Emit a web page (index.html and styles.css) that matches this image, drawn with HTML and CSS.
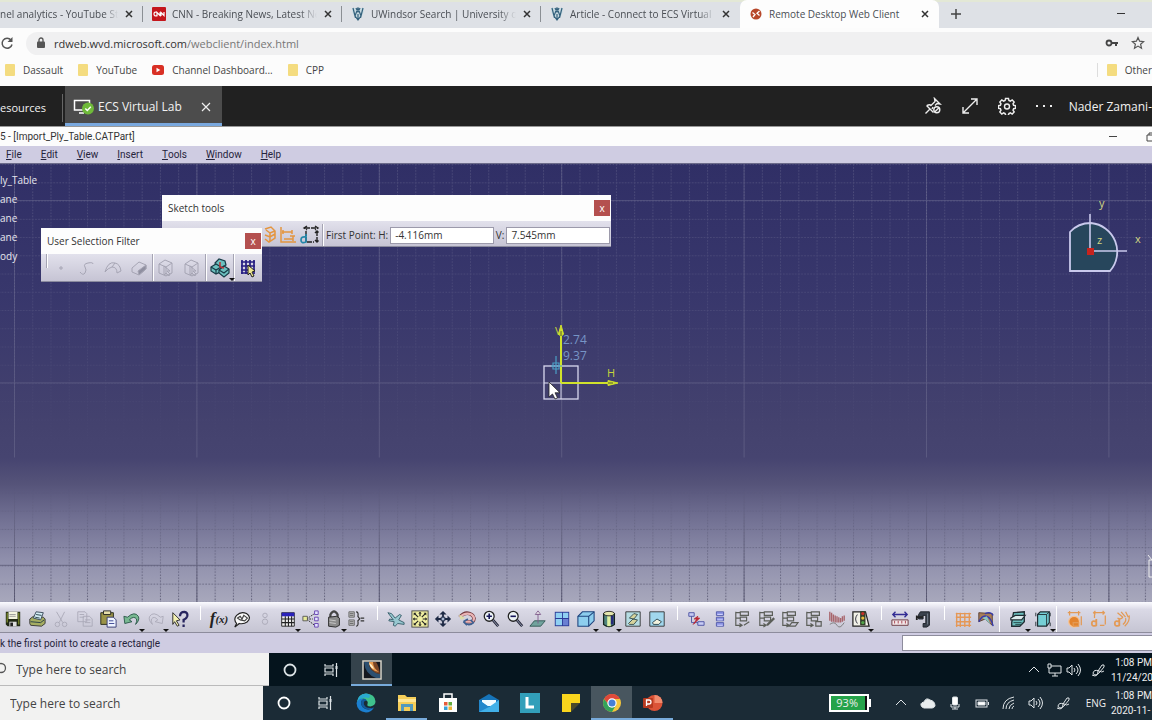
FILE: index.html
```
<!DOCTYPE html>
<html lang="en">
<head>
  <meta charset="UTF-8" />
  <meta name="viewport" content="width=device-width, initial-scale=1.0"/>
  <title>Remote Desktop Web Client</title>
  <link rel="stylesheet" href="styles.css">
</head>
<body>

  <!-- Browser tabs -->
  <nav class="tabs">
    <div class="tab tab-first">
      <span class="tab-title">nel analytics - YouTube Stu</span>
      <button class="close" aria-label="Close tab"><svg viewBox="0 0 10 10"><path d="M2 2l6 6M8 2l-6 6"/></svg></button>
    </div>
    <div class="tab">
      <svg class="favicon" viewBox="0 0 14 14"><rect width="14" height="14" rx="1" fill="#c4161c"/><path d="M5 5.200Q2 4.600 2 7t3 1.800V5.500L8 8.500V5.200M9 9V5.500L12 8.500V5" fill="none" stroke="#fff" stroke-width="1.200"/></svg>
      <span class="tab-title">CNN - Breaking News, Latest Ne</span>
      <button class="close" aria-label="Close tab"><svg viewBox="0 0 10 10"><path d="M2 2l6 6M8 2l-6 6"/></svg></button>
    </div>
    <div class="tab">
      <svg class="favicon" viewBox="0 0 14 14"><path d="M1 1h12q0 8-6 12Q1 9 1 1z" fill="#c9dbe2"/><path d="M2 1l2 8 3-8 3 8 2-8M4 9l3 4 3-4M5 1l2 4 2-4M7 7v6" fill="none" stroke="#34617c" stroke-width="1.200"/></svg>
      <span class="tab-title">UWindsor Search | University of</span>
      <button class="close" aria-label="Close tab"><svg viewBox="0 0 10 10"><path d="M2 2l6 6M8 2l-6 6"/></svg></button>
    </div>
    <div class="tab tab-before">
      <svg class="favicon" viewBox="0 0 14 14"><path d="M1 1h12q0 8-6 12Q1 9 1 1z" fill="#c9dbe2"/><path d="M2 1l2 8 3-8 3 8 2-8M4 9l3 4 3-4M5 1l2 4 2-4M7 7v6" fill="none" stroke="#34617c" stroke-width="1.200"/></svg>
      <span class="tab-title">Article - Connect to ECS Virtual L</span>
      <button class="close" aria-label="Close tab"><svg viewBox="0 0 10 10"><path d="M2 2l6 6M8 2l-6 6"/></svg></button>
    </div>
    <div class="tab tab-active">
      <svg class="favicon" viewBox="0 0 14 14"><circle cx="7" cy="7" r="5.500" fill="#b7472a"/><path d="M3.500 5.500l2.500 2-2 2.500M10.500 4L8 6.200l2.500 2.300" fill="none" stroke="#fff" stroke-width="1.300"/></svg>
      <span class="tab-title">Remote Desktop Web Client</span>
      <button class="close" aria-label="Close tab"><svg viewBox="0 0 10 10"><path d="M2 2l6 6M8 2l-6 6"/></svg></button>
    </div>
    <button class="new-tab" aria-label="New tab"><svg viewBox="0 0 12 12"><path d="M6 1v10M1 6h10"/></svg></button>
    <button class="win-min" aria-label="Minimize"><svg viewBox="0 0 10 10"><path d="M1 4.500h8"/></svg></button>
  </nav>

  <div class="address">
    <button class="reload" aria-label="Reload"><svg viewBox="0 0 14 14"><path d="M11 4A5 5 0 1 0 12 8.500" fill="none" stroke="#555" stroke-width="1.500"/><path d="M12.500 1v5h-5z" fill="#555"/></svg></button>
    <div class="url">
      <svg class="lock" viewBox="0 0 10 12"><rect x="1" y="4.500" width="8" height="6.500" rx="1" fill="#555"/><path d="M3 5V3a2 2 0 0 1 4 0v2" fill="none" stroke="#555" stroke-width="1.300"/></svg>
      <span class="url-text">rdweb.wvd.microsoft.com<i>/webclient/index.html</i></span>
      <svg class="url-icon" viewBox="0 0 14 14"><circle cx="4" cy="7" r="2.500" fill="none" stroke="#444" stroke-width="1.800"/><path d="M6.500 7H13M11 7v3" fill="none" stroke="#444" stroke-width="2"/></svg>
      <svg class="url-icon" viewBox="0 0 14 14"><path d="M7 1.500l1.600 3.700 4 .4-3 2.600.9 4L7 10.100l-3.500 2.100.9-4-3-2.600 4-.4z" fill="none" stroke="#555" stroke-width="1.200"/></svg>
    </div>
  </div>

  <div class="bookmarks">
    <a href="#"><span class="folder"></span>Dassault</a>
    <a href="#"><span class="folder"></span>YouTube</a>
    <a href="#"><svg class="yt" viewBox="0 0 12 10"><rect width="12" height="10" rx="2.500" fill="#d93025"/><path d="M4.500 2.800v4.400L8.300 5z" fill="#fff"/></svg>Channel Dashboard...</a>
    <a href="#"><span class="folder"></span>CPP</a>
    <a href="#" class="other"><span class="folder"></span>Other</a>
  </div>

  <!-- Remote desktop bar -->
  <header class="remote">
    <a href="#" class="resources">esources</a>
    <div class="session">
      <svg class="monitor" viewBox="0 0 22 18"><path d="M10 12H1.500V2.500h15V6M6 15h5" fill="none" stroke="#fff" stroke-width="1.500"/><circle cx="15" cy="10.500" r="6" fill="#6fba3a"/><path d="M12.300 10.500l2 2 3.500-3.700" fill="none" stroke="#fff" stroke-width="1.400"/></svg>
      <span>ECS Virtual Lab</span>
      <button aria-label="Close session"><svg viewBox="0 0 10 10"><path d="M1 1l8 8M9 1L1 9"/></svg></button>
    </div>
    <div class="remote-tools">
      <button aria-label="Unpin"><svg viewBox="0 0 18 18"><path d="M1.500 16.500L6 12M2.500 8.500l7 7M3 8.500q3-1.500 4 0l4-4-.5-3 5.500 5.500-3-.5-2 2M9 10l-1 2"/><circle cx="12.800" cy="12.800" r="3"/><path d="M10.700 15l4.300-4.300"/></svg></button>
      <button aria-label="Full screen"><svg viewBox="0 0 18 18"><path d="M2 16L16 2M10 2h6v6M2 10v6h6"/></svg></button>
      <button aria-label="Settings"><svg viewBox="0 0 18 18"><path d="M7.500 1.500h3l.4 2 1.500.7 1.800-1.200 2 2-1.200 1.800.6 1.500 2 .4v2.600l-2 .4-.6 1.500 1.200 1.800-2 2-1.800-1.200-1.500.7-.4 2h-3l-.4-2-1.500-.7L3.800 17l-2-2L3 13.200l-.6-1.500-2-.4V8.700l2-.4L3 6.800 1.800 5l2-2 1.800 1.200 1.500-.7z"/><circle cx="9" cy="9.500" r="2.500"/></svg></button>
      <button aria-label="More"><svg viewBox="0 0 18 18"><path d="M1 9h2M8 9h2M15 9h2" stroke-width="2"/></svg></button>
    </div>
    <span class="user">Nader Zamani-</span>
  </header>

  <div class="app-title">
    <span>5 - [Import_Ply_Table.CATPart]</span>
    <button aria-label="Minimize"><svg viewBox="0 0 10 10"><path d="M1 4.500h8"/></svg></button>
    <button class="restore" aria-label="Restore"><svg viewBox="0 0 10 10"><path d="M1 3h6v6H1zM3 3V1h6v6H7"/></svg></button>
  </div>

  <nav class="menu">
    <button><u>F</u>ile</button>
    <button><u>E</u>dit</button>
    <button><u>V</u>iew</button>
    <button><u>I</u>nsert</button>
    <button><u>T</u>ools</button>
    <button><u>W</u>indow</button>
    <button><u>H</u>elp</button>
  </nav>

  <!-- Sketcher -->
  <main class="sketch">
    <svg class="drawing">
      <defs>
        <pattern id="minor" x="14" y="36.600" width="18.240" height="18.240" patternUnits="userSpaceOnUse">
          <path d="M0 .5H18.240M.5 0V18.240" stroke-dasharray="1.500 1.500"/>
        </pattern>
        <pattern id="major" x="14" y="36" width="182.400" height="182.400" patternUnits="userSpaceOnUse">
          <path d="M0 .5H182.400M.5 0V182.400"/>
        </pattern>
        <pattern id="minorDark" x="14" y="36.600" width="18.240" height="18.240" patternUnits="userSpaceOnUse">
          <path d="M0 .5H18.240M.5 0V18.240" stroke-dasharray="1.500 1.500"/>
        </pattern>
        <pattern id="majorDark" x="14" y="36" width="182.400" height="182.400" patternUnits="userSpaceOnUse">
          <path d="M0 .5H182.400M.5 0V182.400"/>
        </pattern>
        <linearGradient id="fadeTop" x2="0" y2="1">
          <stop offset="0" stop-color="#fff"/>
          <stop offset=".35" stop-color="#999"/>
          <stop offset=".6" stop-color="#222"/>
          <stop offset=".68" stop-color="#000"/>
        </linearGradient>
        <linearGradient id="fadeBottom" x2="0" y2="1">
          <stop offset=".74" stop-color="#000"/>
          <stop offset=".86" stop-color="#999"/>
          <stop offset="1" stop-color="#fff"/>
        </linearGradient>
        <mask id="topMask"><rect width="100%" height="100%" fill="url(#fadeTop)"/></mask>
        <mask id="bottomMask"><rect width="100%" height="100%" fill="url(#fadeBottom)"/></mask>
      </defs>
      <rect width="100%" height="100%" fill="url(#minor)" mask="url(#topMask)" opacity=".35"/>
      <rect width="100%" height="67%" fill="url(#major)" opacity=".3"/>
      <g mask="url(#bottomMask)">
        <rect width="100%" height="100%" fill="url(#minorDark)" opacity=".8"/>
        <rect width="100%" height="100%" fill="url(#majorDark)" opacity=".8"/>
      </g>

      <!-- rectangle under construction -->
      <rect x="544" y="202" width="34" height="33" fill="none" stroke="#d8d8ee" stroke-width="1.300"/>
      <path d="M544 219h17M561 219v16" stroke="#d8d8ee"/>
      <!-- H and V axes -->
      <path d="M561 219V172M561 219h47" stroke="#d0e22c" stroke-width="2"/>
      <path d="M561 161l-2.500 9q2.500 4 5 0zM618 219l-10-2.500v5z" fill="#d0e22c" stroke="#d0e22c"/>
      <path d="M561 167v5M608 219h5" stroke="#555a30" stroke-width="1"/>
      <text x="555" y="171" class="axis">V</text>
      <text x="607" y="213" class="axis">H</text>
      <path d="M556 192v18M551 202h11M553 199h6v6h-6z" fill="none" stroke="#4b9fc6" stroke-width="1.200"/>
      <text x="563" y="180" class="coord">2.74</text>
      <text x="563" y="196" class="coord">9.37</text>
      <path d="M549 218v15l3.500-3 2.500 5 2.500-1.200-2.500-5h5z" fill="#fff" stroke="#222" stroke-width=".8"/>
    </svg>

    <ul class="tree">
      <li>ly_Table</li>
      <li>ane</li>
      <li>ane</li>
      <li>ane</li>
      <li>ody</li>
    </ul>

    <svg class="compass" viewBox="0 0 92 84">
      <path d="M10 22Q18 13 31 13A29 29 0 0 1 50 61H10z" fill="#27465c" stroke="#c9c9ec" stroke-width="1.800"/>
      <path d="M30 41V4M30 41h37" stroke="#c9c9ec" stroke-width="1.600"/>
      <rect x="27" y="38" width="7" height="7" fill="#c8231d"/>
      <text x="39" y="-3">y</text>
      <text x="75" y="33">x</text>
      <text x="37" y="34">z</text>
    </svg>

    <svg class="corner" viewBox="0 0 5 24"><path d="M5 5H2v17h3M1 0l4 5"/></svg>

    <section class="window sketch-tools">
      <div class="window-title">Sketch tools<button aria-label="Close">x</button></div>
      <div class="window-body">
        <svg class="tool orange" viewBox="0 0 20 20"><path d="M9 4l6-2 4 4v7l-6 4-4-3M10 5l4 3 5-2M14 8v8M9 10l5 2 5-3" fill="none"/></svg>
        <svg class="tool orange" viewBox="0 0 20 20"><path d="M3 2v15h15M4 7h10M5 5v4M14 5v4M15 11v5M12 11h5M6 14h9" fill="none"/></svg>
        <svg class="tool" viewBox="0 0 20 20"><path d="M5 3h12M7 1L4 3l3 2M15 1l3 2-3 2M17 6v11M15 8l2-2 2 2M15 15l2 2 2-2M6 6v11h8" fill="none" stroke="#222" stroke-width="1.400" stroke-dasharray="5 1"/><path d="M6 12q-5-1-5 3t5 2V9" fill="none" stroke="#2387a9" stroke-width="1.700"/></svg>
        <span class="rule"></span>
        <label for="point-h">First Point: H:</label>
        <input id="point-h" type="text" value="-4.116mm">
        <label for="point-v">V:</label>
        <input id="point-v" type="text" value="7.545mm">
      </div>
    </section>

    <section class="window filter">
      <div class="window-title">User Selection Filter<button aria-label="Close">x</button></div>
      <div class="window-body">
        <span class="rule rule-short"></span>
        <button aria-label="Point filter"><svg class="tool faded" viewBox="0 0 20 20"><path d="M9 9h2v2H9z"/></svg></button>
        <button aria-label="Curve filter"><svg class="tool faded" viewBox="0 0 20 20"><path d="M3 14q3 4 5 1t0-6 3-4 5 1"/></svg></button>
        <button aria-label="Surface filter"><svg class="tool faded" viewBox="0 0 20 20"><path d="M2 14Q5 3 12 5q5 1 6 8l-4 2q0-6-5-6-4 1-7 5zM12 5l-3 4"/></svg></button>
        <button aria-label="Volume filter"><svg class="tool faded" viewBox="0 0 20 20"><path d="M3 10l7-6 7 3v4l-7 6-7-3z"/><path d="M9 13l8-6v4l-7 6z" fill="#8f8fa0"/></svg></button>
        <span class="rule"></span>
        <button aria-label="Feature element filter"><svg class="tool faded" viewBox="0 0 20 20"><path d="M3 6l6-4 7 3v10l-6 3-7-3zM3 6l7 3v9M10 9l6-4M8 8v9l2-2 3 3 1-2-3-3h3z"/></svg></button>
        <button aria-label="Geometrical element filter"><svg class="tool faded" viewBox="0 0 20 20"><path d="M3 6l6-4 7 3v10l-6 3-7-3zM3 6l7 3v9M10 9l6-4M8 8v9l2-2 3 3 1-2-3-3h3z"/></svg></button>
        <span class="rule"></span>
        <button class="more" aria-label="Selection sets"><svg class="tool" viewBox="0 0 20 20"><g fill="#6cc0bf" stroke="#183b47" stroke-width="1.200"><path d="M5 5l4-4 6 2 1 4-5 3-5-2z"/><path d="M1 9l5-3 5 3-1 5-4 2-5-3z"/><path d="M9 12l5-4 5 3v4l-5 4-5-4z"/><path d="M1 9l5 3 5-3M6 12v4M9 12l5 3 5-4" fill="none"/></g><path d="M10 4v5l4 1" fill="none" stroke="#ba3135" stroke-width="1.500"/></svg></button>
        <span class="rule"></span>
        <button aria-label="Grid selection"><svg class="tool" viewBox="0 0 20 20"><path d="M4 2v14M8 2v14M12 2v14M16 2v14M3 4h14M3 8h14M3 12h14M3 15h10" stroke="#251c82" stroke-width="1.700"/><path d="M10 7l7 6-3 1 2 4-2 1-2-4-2 2z" fill="#eee791" stroke="#222"/></svg></button>
      </div>
    </section>
  </main>

  <!-- Bottom tool bar, one group per separator -->
  <div class="toolbar">
    <div class="group group-standard">
      <button aria-label="Save"><svg viewBox="0 0 20 20"><path d="M2 2h16v16H4l-2-2z" fill="#202814"/><path d="M5 2h10v8H5z" fill="#f3f4e0"/><path d="M3 3h1v11H3zM16 3h1v13h-1z" fill="#a4b43a"/><path d="M6 13h8v5H6z" fill="#ddd"/><path d="M7 14h3v4H7z" fill="#222"/><path d="M6 5h7M6 7h7" stroke="#999"/></svg></button>
      <button aria-label="Print"><svg viewBox="0 0 20 20"><path d="M2 10l4-3 11 1 2 2v5l-4 3-12-1-1-2z" fill="#a5ad62" stroke="#333"/><path d="M6 9l3-7 8 1-3 8z" fill="#d3ecf4" stroke="#345"/><path d="M3 13l11 1 4-3M9 5l6 1M8 8l5 1" stroke="#223b44" fill="none"/></svg></button>
      <button aria-label="Cut"><svg viewBox="0 0 20 20" class="disabled"><path d="M5 2l7 12M14 2L8 14"/><circle cx="6" cy="16" r="2.500"/><circle cx="14" cy="16" r="2.500"/></svg></button>
      <button aria-label="Copy"><svg viewBox="0 0 20 20" class="disabled"><path d="M2 2h8l2 2v9H2zM8 7h7l3 3v8H8zM4 5h5M4 8h5M10 11h6M10 14h6"/></svg></button>
      <button aria-label="Paste"><svg viewBox="0 0 20 20"><path d="M2 3h14v13H2z" fill="#9a9347" stroke="#242716"/><path d="M5 1h8v4H5z" fill="#e6dfab" stroke="#222"/><path d="M9 8h7l3 3v8H9z" fill="#eef3ff" stroke="#333870"/><path d="M11 12h5M11 15h6" stroke="#35418e"/></svg></button>
      <button class="more" aria-label="Undo"><svg viewBox="0 0 20 20"><path d="M1 7l1 8 8-2-3-2q5-5 8-1 1 2-1 6 5-5 3-9-4-6-12 1z" fill="#78b891" stroke="#285647"/></svg></button>
      <button class="more" aria-label="Redo"><svg viewBox="0 0 20 20" class="disabled"><path d="M18 7l-1 8-8-2 3-2Q8 6 5 10q-1 2 1 6-5-5-3-9 4-6 12 1z"/></svg></button>
      <button aria-label="What's this"><svg viewBox="0 0 20 20"><path d="M2 3l8 8-4 1 3 5-2 1-3-5-2 3z" fill="#f4f1b2" stroke="#222"/><path d="M10 7q0-5 5-5 4 1 3 5-1 3-4 4v3M14 16v3" fill="none" stroke="#27245e" stroke-width="2.500"/></svg></button>
    </div>

    <div class="group group-knowledge">
      <button class="fx" aria-label="Formula">f<small>(x)</small></button>
      <button aria-label="Comment"><svg viewBox="0 0 20 20"><path d="M4 15Q0 10 4 6q5-5 11-2 6 4 1 9-4 3-9 2l-5 4z" fill="#fafafa" stroke="#222" stroke-width="1.300"/><path d="M5 9l3-2 2 3 2-4 4 3-3 3-5-1z" fill="none" stroke="#444" stroke-width="1.300"/></svg></button>
      <button aria-label="Link"><svg viewBox="0 0 20 20" class="disabled"><circle cx="10" cy="6" r="2.500"/><circle cx="10" cy="13" r="3"/></svg></button>
      <button class="more" aria-label="Design table"><svg viewBox="0 0 20 20"><path d="M3 3h14v15H3z" fill="#eee" stroke="#222"/><path d="M3 3h14v4H3z" fill="#2a22bb"/><path d="M3 10h14M3 14h14M7 7v11M10.500 7v11M14 7v11" stroke="#222" stroke-width="1.200"/></svg></button>
      <button aria-label="Relations"><svg viewBox="0 0 20 20"><path d="M5 10h7M5 10l9-6M5 10l9 7" stroke="#222" stroke-dasharray="2 1"/><path d="M1 7h5v5H1z" fill="#e8eb9a" stroke="#555"/><path d="M14 1h4v4h-4zM14 8h4v4h-4zM14 15h4v4h-4z" fill="#e4e4ff" stroke="#6440b0"/></svg></button>
      <button class="more" aria-label="Lock parameter"><svg viewBox="0 0 20 20"><path d="M6 9V5q4-7 8 0v5" fill="none" stroke="#444" stroke-width="2.500"/><path d="M4 8l9-1 3 2v8l-4 2-8-1z" fill="#8b8b8b" stroke="#222"/><path d="M5 11l7 1M5 14l7 1" stroke="#ccc"/></svg></button>
      <button aria-label="Equivalent dimensions"><svg viewBox="0 0 20 20"><path d="M1 2h6v6H1zM1 11h6v6H1zM2 4h4M2 6h4M2 13h4M2 15h4" fill="#bbb" stroke="#666"/><path d="M9 2q3 0 2 5l2 3-2 2q1 6-2 6M14 9h4M14 12h4" fill="none" stroke="#333" stroke-width="1.300"/></svg></button>
    </div>

    <div class="group group-view">
      <button aria-label="Fly mode"><svg viewBox="0 0 20 20"><path d="M1 3l4 1 4 5 5-4 2 1-3 5 6 3v2l-7-1-3 3-2-1 1-4-6-1 1-2 4 1z" fill="#98c8d0" stroke="#345b68"/></svg></button>
      <button aria-label="Fit all in"><svg viewBox="0 0 20 20"><rect x="1" y="1" width="18" height="18" fill="#f1efa2" stroke="#444"/><path d="M4 4l4 4M16 4l-4 4M4 16l4-4M16 16l-4-4M10 3v4M10 13v4M3 10h4M13 10h4" stroke="#222" stroke-width="1.300"/><path d="M3 3h3L3 6zM17 3v3l-3-3zM3 17v-3l3 3zM17 17h-3l3-3zM10 2l2 2H8zM10 18l-2-2h4zM2 10l2-2v4zM18 10l-2 2V8z" fill="#222"/></svg></button>
      <button aria-label="Pan"><svg viewBox="0 0 20 20"><path d="M10 1l4 4H6zM10 19l-4-4h8zM1 10l4-4v8zM19 10l-4 4V6z" fill="#1d2944"/><path d="M10 4v12M4 10h12" stroke="#1d2944" stroke-width="2"/><path d="M8 8h4v4H8z" fill="#aab8d3" stroke="#1d2944"/></svg></button>
      <button aria-label="Rotate"><svg viewBox="0 0 20 20"><path d="M2 8q6-7 13-3 5 4 1 8H8" fill="none" stroke="#71373c" stroke-width="4"/><path d="M2 8q6-6 13-3 5 4 1 8H8" fill="none" stroke="#e9b4b5" stroke-width="2.500"/><path d="M1 5l2 6 5-2z" fill="#dda"/><path d="M6 13q6 6 11 1l-3-3M6 13l5-3M6 13l4 4" fill="none" stroke="#3d5f91" stroke-width="1.800"/></svg></button>
      <button aria-label="Zoom in"><svg viewBox="0 0 20 20"><path d="M12 11l6 7" stroke="#252535" stroke-width="3"/><path d="M12 11l6 7" stroke="#9aa5c1"/><circle cx="8" cy="7" r="5.500" fill="#eef4f6" stroke="#222" stroke-width="1.400"/><path d="M5 7h6M8 4v6" stroke="#16165a" stroke-width="1.800"/></svg></button>
      <button aria-label="Zoom out"><svg viewBox="0 0 20 20"><path d="M12 11l6 7" stroke="#252535" stroke-width="3"/><path d="M12 11l6 7" stroke="#9aa5c1"/><circle cx="8" cy="7" r="5.500" fill="#eef4f6" stroke="#222" stroke-width="1.400"/><path d="M5 7h6" stroke="#16165a" stroke-width="1.800"/></svg></button>
      <button aria-label="Normal view"><svg viewBox="0 0 20 20"><path d="M6 12h12l-5 6H1z" fill="#71a39d" stroke="#315653"/><path d="M10 15V4M7 5l3-4 3 4z" fill="#eee" stroke="#805c8c"/></svg></button>
      <button aria-label="Multi view"><svg viewBox="0 0 20 20"><path d="M2 2h16v16H2z" fill="#2b3a96"/><path d="M3 3h7v6H3zM11 3h6v6h-6zM3 10h7v7H3z" fill="#8fd0f2"/><path d="M11 10h6v7h-6z" fill="#6a7fd2"/></svg></button>
      <button class="more" aria-label="Isometric view"><svg viewBox="0 0 20 20"><path d="M1 7l5-5h13v10l-6 6H1z" fill="#8dceee" stroke="#20457e" stroke-width="1.200"/><path d="M1 7h12v11M13 7l6-5" fill="none" stroke="#20457e" stroke-width="1.200"/></svg></button>
      <button class="more" aria-label="Shading"><svg viewBox="0 0 20 20"><path d="M4 4v12q6 5 12 0V4z" fill="#51857e" stroke="#16241f" stroke-width="1.400"/><path d="M8 6h4v12H8z" fill="#dff0a2"/><path d="M12 6h3v10h-3z" fill="#252978"/><ellipse cx="10" cy="4" rx="6" ry="2.500" fill="#e4e6ad" stroke="#222"/></svg></button>
      <button aria-label="Hide or show"><svg viewBox="0 0 20 20"><path d="M2 2h16v16H2z" fill="#b5dce2" stroke="#333"/><path d="M6 9l5-5 4 1-4 5zM5 15l5-5 5 1-4 5H6z" fill="#d6d39c" stroke="#334b4e"/></svg></button>
      <button aria-label="Swap visible space"><svg viewBox="0 0 20 20"><path d="M2 2h16v16H2z" fill="#a1d7ed" stroke="#333"/><path d="M5 14l5-4 5 3-3 3H6z" fill="#f3f3de" stroke="#223d48"/></svg></button>
    </div>

    <div class="group group-analysis">
      <button aria-label="Solving status"><svg viewBox="0 0 20 20"><path d="M2 3h6v4H2zM12 13h7v4h-7z" fill="#c7cbf5" stroke="#4a50a0"/><path d="M5 7v7h7" fill="none" stroke="#4a50a0"/><path d="M12 7l-4 3h3l-4 6 7-7h-3z" fill="#ba2835" stroke="#ba2835"/></svg></button>
      <button aria-label="Structure"><svg viewBox="0 0 20 20"><path d="M6 2h8v4H6zM6 8h8v4H6zM6 14h8v4H6z" fill="#9098e8" stroke="#5058a7"/><path d="M7 5h6M7 11h6M7 17h6" stroke="#d6d8ff"/></svg></button>
      <button aria-label="Geometry tree"><svg viewBox="0 0 20 20" class="branches"><path d="M2 2v15h7M2 3h5M2 9h5M7 2h9v4H7zM7 8h7v4H7zM6 15l3 2-3 2M11 17l6-4"/></svg></button>
      <button aria-label="Edit tree"><svg viewBox="0 0 20 20" class="branches"><path d="M2 2v15h7M2 3h5M2 9h5M7 2h9v4H7zM7 8h7v4H7zM6 15l3 2-3 2"/><path d="M10 17l8-8" stroke-width="2.500"/></svg></button>
      <button aria-label="Plane tree"><svg viewBox="0 0 20 20" class="branches"><path d="M2 2v15h6M2 3h5M2 9h5M7 2h9v4H7zM7 8h7v4H7zM6 15l3 2-3 2M12 14h7l-3 4H9z"/></svg></button>
      <button aria-label="Body tree"><svg viewBox="0 0 20 20" class="branches"><path d="M2 2v15h6M2 3h5M2 9h5M7 2h9v4H7zM7 8h7v4H7zM6 15l3 2-3 2M12 18v-5h6v5z"/></svg></button>
      <button aria-label="Curvature"><svg viewBox="0 0 20 20"><path d="M2 2v10M4 3v10M6 5v8M8 6v8M10 7v7M12 8v6M14 9v5M16 7v6M18 6v6" stroke="#a8656c" stroke-width="1.500"/><path d="M2 16q5-4 8 1t8-3" fill="none" stroke="#777"/></svg></button>
      <button class="more" aria-label="Analysis"><svg viewBox="0 0 20 20"><path d="M1 2h14l4 16H1z" fill="#f2f2e8" stroke="#222" stroke-width="1.400"/><rect x="9" y="1" width="6" height="16" rx="1" fill="#35402c"/><circle cx="12" cy="4" r="1.800" fill="#c7302a"/><circle cx="12" cy="9" r="1.800" fill="#e6bb3d"/><circle cx="12" cy="14" r="1.800" fill="#53a34b"/><path d="M6 5q-4 5 0 10" fill="none" stroke="#223"/></svg></button>
    </div>

    <div class="group group-measure">
      <button aria-label="Measure between"><svg viewBox="0 0 20 20"><path d="M3 5h14M5 2L2 5l3 3M15 2l3 3-3 3" fill="none" stroke="#322b94" stroke-width="1.500"/><path d="M1 11h18v6H1z" fill="#f3e6e8" stroke="#67323b"/><path d="M4 12v3M8 12v3M12 12v3M16 12v3" stroke="#a43b47"/></svg></button>
      <button aria-label="Measure item"><svg viewBox="0 0 20 20"><path d="M6 2h10v15l-3 2h-4v-4h3V6H9v4H4V5z" fill="#3b424d" stroke="#1a1e26"/><path d="M2 8h7M2 6v5" stroke="#222" stroke-width="2"/><path d="M14 4v12" stroke="#7b8591"/></svg></button>
    </div>

    <div class="group group-tight group-grid">
      <button aria-label="Grid"><svg viewBox="0 0 20 20"><path d="M3 3v16M7 3v16M12 3v16M17 3v16M2 4h17M2 8h17M2 13h17M2 17h17" stroke="#e59755" stroke-width="1.500"/></svg></button>
      <button aria-label="Snap to point"><svg viewBox="0 0 20 20"><path d="M2 3l15 1v13L9 10l-7 3z" fill="#a87c58" stroke="#573d30"/><path d="M2 13q4-8 9-6t7 11M9 4q6-3 9 2" fill="none" stroke="#3339af" stroke-width="1.500"/><path d="M6 9l5-2 4 9-4-4z" fill="#8cc8c6"/></svg></button>
    </div>

    <div class="group group-tight group-cut">
      <button class="more" aria-label="Cut part"><svg viewBox="0 0 20 20"><path d="M5 3l12-1v11l-5 5H3v-4z" fill="#6abebd" stroke="#202c32" stroke-width="1.500"/><path d="M2 9l5-3h11l-4 5H2z" fill="#dcebed" stroke="#202c32" stroke-width="1.300"/><path d="M5 14h9M7 16h7" stroke="#244"/></svg></button>
      <button class="more" aria-label="Show body"><svg viewBox="0 0 20 20"><path d="M4 5l3-3h10v12l-3 4H4z" fill="#75cfd5" stroke="#202c32" stroke-width="1.300"/><path d="M4 5h10v13M14 5l3-3M2 3v4M2 13v5M18 3v4M18 14v4" fill="none" stroke="#202c32"/></svg></button>
    </div>

    <div class="group group-constraints">
      <button aria-label="Construction element"><svg viewBox="0 0 20 20" class="constraint"><path d="M2 3h14M4 1v5M14 1v5M17 7v10"/><circle cx="9" cy="13" r="6" fill="#e3842e" stroke="#f6c496"/><path d="M8 14h6v4H8z" fill="#e3842e"/></svg></button>
      <button aria-label="Geometrical constraints"><svg viewBox="0 0 20 20" class="constraint"><path d="M4 3h11M6 1L4 3l2 2M14 1l2 2-2 2M17 6v10M11 17h5M5 5v4"/><path d="M7 13q-5-2-5 2t5 2v-7" stroke-width="2"/></svg></button>
      <button aria-label="Dimensional constraints"><svg viewBox="0 0 20 20" class="constraint"><path d="M5 3l6 5M9 2l5 6M14 2l3 6M18 6q1 7-5 12M14 9q1 4-3 7M11 8q-2 3-6 1"/><path d="M7 13q-5-2-5 2t5 2v-7" stroke-width="2"/></svg></button>
    </div>
  </div>

  <div class="status">
    <label for="command">k the first point to create a rectangle</label>
    <input id="command" type="text">
  </div>

  <!-- Taskbar of the remote machine -->
  <footer class="taskbar taskbar-remote">
    <div class="search">
      <svg viewBox="0 0 12 20"><circle cx="1" cy="9" r="4.500" fill="none" stroke="#555" stroke-width="1.300"/></svg>
      <input type="text" aria-label="Search" placeholder="Type here to search">
    </div>
    <div class="apps">
      <button aria-label="Cortana"><svg viewBox="0 0 20 20"><circle cx="10" cy="10" r="5.500" fill="none" stroke="#dde3e6" stroke-width="1.800"/></svg></button>
      <button aria-label="Task view"><svg viewBox="0 0 20 20"><path d="M4 4v2h8V4M4 16v-2h8v2M4 8h8v4H4zM15.500 3v14" fill="none" stroke="#dde3e6" stroke-width="1.200"/><path d="M14.500 6h2v3h-2z" fill="#dde3e6"/></svg></button>
      <button class="open" aria-label="Catia"><svg viewBox="0 0 20 20"><rect x="1" y="1" width="18" height="18" fill="#15171e" stroke="#d6d3c9" stroke-width="1.500"/><path d="M2 2h5q0 10 11 12v4h-4Q3 14 2 2z" fill="#2c4f70"/><path d="M7 2h7q3 4 4 12Q7 12 7 2z" fill="#7a4526"/><path d="M7 2h4q0 6 6 10-9-1-10-10z" fill="#e99c50"/><path d="M7 3q3 1 5 6-4-1-5-6z" fill="#fff1cd"/></svg></button>
    </div>
    <div class="tray">
      <svg viewBox="0 0 16 16"><path d="M3 10l5-5 5 5"/></svg>
      <svg viewBox="0 0 16 16"><path d="M2 2v4h3V2zM5 4h10v7H3V6M9 11v3M6 14h6"/></svg>
      <svg viewBox="0 0 16 16"><path d="M1 6v4h2l3 3V3L3 6zM8 6q2 2 0 4M10 4q4 4 0 8M12 2q5 6 0 12"/></svg>
      <svg class="pen" viewBox="0 0 16 16"><path d="M2 13q6 3 6-4l4-6q3-1 2 2l-5 6q-5 4-6 0 1-4 6-2 3 2 5 0"/></svg>
    </div>
    <div class="clock"><time>1:08 PM</time><span>11/24/20</span></div>
  </footer>

  <!-- Taskbar of the local machine -->
  <footer class="taskbar taskbar-local">
    <div class="search">
      <input type="text" aria-label="Search" placeholder="Type here to search">
    </div>
    <div class="apps">
      <button aria-label="Cortana"><svg viewBox="0 0 20 20"><circle cx="10" cy="10" r="5.500" fill="none" stroke="#fff" stroke-width="1.800"/></svg></button>
      <button aria-label="Task view"><svg viewBox="0 0 20 20"><path d="M4 4v2h8V4M4 16v-2h8v2M4 8h8v4H4zM15.500 3v14" fill="none" stroke="#dde3e6" stroke-width="1.200"/><path d="M14.500 6h2v3h-2z" fill="#dde3e6"/></svg></button>
      <button aria-label="Edge"><svg viewBox="0 0 20 20"><path d="M1 9Q2 1 10 .5q9 .5 9.500 8 0 4-5 5-4 0-3-2.500 1-3-2-4-4-1-8.500 2z" fill="#3fc28d"/><path d="M1 9Q2 1 10 .5 16 1 13 5 6 3 1 9z" fill="#2aa9d2"/><path d="M.5 10q2-5 6.500-4.500-4 5 0 9 5 4 11 0-3 5-8 5-9-1-9.500-9.500z" fill="#1b7fd0"/><path d="M7 5.500q3 0 4 2-4 0-3 4 2 5 10 3-5 4-11 0-4-4 0-9z" fill="#125a9e"/></svg></button>
      <button class="running" aria-label="Explorer"><svg viewBox="0 0 20 20"><path d="M1 2h7l2 2h9v14H1z" fill="#f5ce59"/><path d="M1 6h18v3H1z" fill="#ffe695"/><path d="M4 18v-7h12v7h-3v-4H7v4z" fill="#5299bd"/></svg></button>
      <button aria-label="Store"><svg viewBox="0 0 20 20"><path d="M6 6V1h8v5" fill="none" stroke="#fff" stroke-width="1.500"/><path d="M1 5h18v14H1z" fill="#fff"/><path d="M6 9h3.500v3.500H6z" fill="#e75b3b"/><path d="M10.500 9H14v3.500h-3.500z" fill="#65ad40"/><path d="M6 13.500h3.500V17H6z" fill="#36a0d8"/><path d="M10.500 13.500H14V17h-3.500z" fill="#edb336"/></svg></button>
      <button aria-label="Mail"><svg viewBox="0 0 20 20"><path d="M0 7l10-6 10 6v12H0z" fill="#1674b9"/><path d="M3 7h14v6H3z" fill="#f2fbff"/><path d="M0 7l10 7 10-7v12H0z" fill="#41b0e8"/><path d="M0 7l10 7-10 5z" fill="#2387cb"/></svg></button>
      <button aria-label="L"><svg viewBox="0 0 20 20"><path d="M0 0h20v20H0z" fill="#329fba"/><path d="M7 4v10h7" fill="none" stroke="#fff" stroke-width="3"/></svg></button>
      <button aria-label="Sticky Notes"><svg viewBox="0 0 20 20"><path d="M1 1h18v18H1z" fill="#f9d51d"/><path d="M10 10h9v9h-9z" fill="#4b4a2a"/><path d="M19 10v9h-9z" fill="#1b2b36"/></svg></button>
      <button class="running selected" aria-label="Chrome"><svg viewBox="0 0 20 20"><circle cx="10" cy="10" r="9" fill="#f5c63b"/><path d="M2 6a9 9 0 0 1 16 0h-8l-3 6z" fill="#df493b"/><path d="M2 6a9 9 0 0 0 8 13l4-7H7z" fill="#34a35a"/><circle cx="10" cy="10" r="4.700" fill="#fff"/><circle cx="10" cy="10" r="3.500" fill="#477fd5"/></svg></button>
      <button class="running" aria-label="PowerPoint"><svg viewBox="0 0 20 20"><circle cx="11.500" cy="10" r="8" fill="#db5337"/><path d="M11.500 2a8 8 0 0 1 8 8h-8z" fill="#f18b6d"/><rect y="5" width="10" height="10" rx="1" fill="#b7391f"/><path d="M3.500 13V7H6q2 0 2 2t-2 2H4" fill="none" stroke="#fff" stroke-width="1.300"/></svg></button>
    </div>
    <div class="battery">93%</div>
    <div class="tray">
      <svg viewBox="0 0 16 16"><path d="M3 10l5-5 5 5"/></svg>
      <svg viewBox="0 0 16 16"><path d="M2 12q-3-4 2-5 2-5 6-2 5 1 5 6-1 2-3 2H4z" fill="#e8ecee"/></svg>
      <svg viewBox="0 0 16 16"><rect x="5.500" y="2" width="5" height="8" rx="1" fill="#fff"/><path d="M4 9v3h8V9M8 12v2M5 14h6"/></svg>
      <svg viewBox="0 0 16 16"><rect x="2" y="5" width="11" height="7"/><path d="M4 7h7v3H4z" fill="#fff"/><path d="M14.500 7v3"/></svg>
      <svg viewBox="0 0 16 16"><path d="M2 14Q2 4 13 2M5 14q0-7 8-9M8 14q0-4 5-6M11 14q0-2 2-3"/></svg>
      <svg viewBox="0 0 16 16"><path d="M1 6v4h2l3 3V3L3 6zM8 6q2 2 0 4M10 4q4 4 0 8M12 2q5 6 0 12"/></svg>
      <svg viewBox="0 0 16 16"><path d="M2 13q6 3 6-4l4-6q3-1 2 2l-5 6q-5 4-6 0 1-4 6-2 3 2 5 0"/></svg>
      <span class="lang">ENG</span>
    </div>
    <div class="clock"><time>1:08 PM</time><span>2020-11-</span></div>
  </footer>

</body>
</html>
```

FILE: styles.css
```
* {
  box-sizing: border-box;
}

body {
  margin: 0;
  height: 100vh;
  display: flex;
  flex-direction: column;
  overflow: hidden;
  font-family: "Open Sans", "Noto Sans", sans-serif;
  font-size: 11px;
  color: #333;
  background: #fcfcfc;
}

button {
  display: flex;
  align-items: center;
  justify-content: center;
  flex: none;
  padding: 0;
  border: none;
  background: none;
  font: inherit;
  color: inherit;
}

input {
  font: inherit;
  color: inherit;
  border: none;
  outline: none;
  min-width: 0;
}

a {
  color: inherit;
  text-decoration: none;
}

svg {
  display: block;
  flex: none;
}

/* Browser */
.app-title,
.menu,
.status,
.clock {
  font-family: Roboto, "Noto Sans", sans-serif;
}

.tabs {
  height: 28px;
  flex: none;
  display: flex;
  align-items: stretch;
  padding-bottom: 2px;
  background: #dee1e6;
  border-top: 2px solid #e3e8d6;
  color: #4a4e54;
  font-size: 10px;
}

.tab {
  flex: 0 0 199px;
  min-width: 0;
  display: flex;
  align-items: center;
  gap: 6px;
  padding: 0 9px;
  position: relative;
}

.tab::after {
  content: "";
  position: absolute;
  right: 0;
  top: 4px;
  height: 16px;
  border-right: 1px solid #8b8f94;
}

.tab-first {
  flex-basis: 143px;
  padding-left: 0;
}

.tab-before::after,
.tab-active::after {
  display: none;
}

.tab-active {
  margin: -2px 0;
  padding: 2px 9px;
  background: #fdfdfd;
  border-radius: 7px 7px 0 0;
}

.tab-title {
  flex: 1;
  min-width: 0;
  white-space: nowrap;
  -webkit-mask-image: linear-gradient(to right, #000 88%, transparent);
  mask-image: linear-gradient(to right, #000 88%, transparent);
}

.tab-active .tab-title {
  -webkit-mask-image: none;
  mask-image: none;
}

.favicon {
  width: 14px;
  height: 14px;
}

.close svg {
  width: 10px;
  height: 10px;
  stroke: #333;
  stroke-width: 1.5;
}

.new-tab {
  width: 34px;
}

.new-tab svg {
  width: 12px;
  height: 12px;
  stroke: #444;
  stroke-width: 1.5;
}

.win-min {
  margin-left: auto;
  margin-right: 26px;
}

.win-min svg {
  width: 10px;
  height: 10px;
  stroke: #333;
}

.address {
  height: 30px;
  flex: none;
  display: flex;
  align-items: center;
  gap: 12px;
}

.reload svg {
  width: 14px;
  height: 14px;
}

.url {
  flex: 1;
  height: 23px;
  display: flex;
  align-items: center;
  gap: 8px;
  padding: 0 7px 0 10px;
  background: #f0f0f1;
  border-radius: 12px 0 0 12px;
  font-size: 11px;
}

.url-text {
  flex: 1;
  color: #333;
}

.url-text i {
  font-style: normal;
  color: #777;
}

.lock {
  width: 10px;
  height: 12px;
}

.url-icon {
  width: 14px;
  height: 14px;
  margin-left: 4px;
}

.bookmarks {
  height: 28px;
  flex: none;
  display: flex;
  align-items: center;
  gap: 15px;
  padding: 0 0 4px 5px;
  color: #444;
  font-size: 10px;
}

.bookmarks a {
  display: flex;
  align-items: center;
  gap: 8px;
}

.folder {
  width: 10px;
  height: 12px;
  background: #f4dc80;
  border-radius: 1px;
}

.yt {
  width: 12px;
  height: 10px;
}

.bookmarks .other {
  margin-left: auto;
  padding-left: 9px;
  border-left: 1px solid #ddd;
}

/* Remote desktop bar */
.remote {
  height: 40px;
  flex: none;
  display: flex;
  align-items: stretch;
  background: #212121;
  color: #f2f2f2;
  font-size: 12px;
}

.resources {
  flex: 0 0 65px;
  display: flex;
  align-items: center;
  padding-top: 2px;
  background: linear-gradient(#666, #666) 62px 8px / 1px 28px no-repeat;
  font-size: 11px;
}

.session {
  flex: 0 0 157px;
  display: flex;
  align-items: center;
  gap: 3px;
  padding: 4px 11px 0 8px;
  background: #4c4c4c;
  border-bottom: 3px solid #79a8de;
}

.session button {
  margin-left: auto;
}

.session button svg {
  width: 10px;
  height: 10px;
  stroke: #eee;
  stroke-width: 1.2;
}

.monitor {
  width: 22px;
  height: 18px;
}

.remote-tools {
  margin-left: auto;
  display: flex;
  align-items: center;
  gap: 19px;
}

.remote-tools svg {
  width: 18px;
  height: 18px;
  fill: none;
  stroke: #eee;
  stroke-width: 1.4;
}

.user {
  align-self: center;
  margin-left: 16px;
  white-space: nowrap;
}

/* Catia window */
.app-title {
  height: 20px;
  flex: none;
  display: flex;
  align-items: center;
  font-size: 10px;
  border-top: 1px solid #999;
}

.app-title span {
  flex: 1;
}

.app-title button {
  width: 30px;
}

.app-title svg {
  width: 10px;
  height: 10px;
  fill: none;
  stroke: #444;
}

.app-title .restore {
  width: 10px;
  margin-left: 18px;
  margin-right: -4px;
}

.menu {
  height: 18px;
  flex: none;
  display: flex;
  align-items: center;
  gap: 19px;
  padding-left: 6px;
  background: #cfcce2;
  border-bottom: 1px solid #6b6a8a;
  font-size: 10px;
  color: #26243c;
}

.sketch {
  flex: 1;
  position: relative;
  overflow: hidden;
  background: linear-gradient(#302f66, #38376c 30%, #44426e 60%, #464470 67%, #555379 73%, #6e6d90 80%, #8e8eab 90%, #a8a8bc);
}

.drawing {
  position: absolute;
  width: 100%;
  height: 100%;
}

#minor path,
#major path {
  stroke: #8c8ca8;
  fill: none;
}

#minorDark path,
#majorDark path {
  stroke: #4e4d68;
  fill: none;
}

.axis {
  font-size: 11px;
  fill: #c6d639;
}

.coord {
  font-size: 12px;
  fill: #7795c6;
}

.tree {
  position: absolute;
  left: 0;
  top: 7px;
  margin: 0;
  padding: 0;
  list-style: none;
  font-size: 10px;
  line-height: 19px;
  color: #e6e6ee;
}

.compass {
  position: absolute;
  top: 46px;
  right: 0;
  width: 92px;
  height: 84px;
  overflow: visible;
  font-size: 11px;
  fill: #d2d784;
}

.corner {
  position: absolute;
  right: 0;
  bottom: 23px;
  width: 5px;
  height: 24px;
  fill: none;
  stroke: #eee;
}

.window {
  position: absolute;
  font-size: 10px;
  background: #fdfdfd;
  border-bottom: 1px solid #8b8b9e;
}

.window-title {
  height: 26px;
  display: flex;
  align-items: center;
  justify-content: space-between;
  padding: 0 1px 0 6px;
}

.window-title button {
  width: 16px;
  height: 16px;
  background: #b4504f;
  color: #fff;
  line-height: 12px;
}

.window-body {
  display: flex;
  align-items: center;
  background: linear-gradient(#e2e1ec, #c6c4d4);
}

.sketch-tools {
  left: 162px;
  top: 31px;
  width: 449px;
}

.sketch-tools .window-body {
  height: 25px;
  padding: 3px 1px 0 94px;
  gap: 2px;
}

.sketch-tools input {
  flex: 1;
  height: 17px;
  padding: 0 4px;
  background: #fff;
  border: 1px solid #9c9aab;
}

.filter {
  left: 41px;
  top: 64px;
  width: 221px;
}

.filter .window-body {
  height: 27px;
  padding: 0 1px 0 5px;
}

.filter .window-body button {
  flex: 1;
}

.tool {
  width: 20px;
  height: 20px;
}

.orange {
  stroke: #e4953f;
  stroke-width: 1.5;
}

.faded {
  fill: none;
  stroke: #a6a5b4;
}

.rule {
  align-self: stretch;
  border-left: 1px solid #a5a4b3;
  border-right: 1px solid #fff;
}

.rule-short {
  align-self: flex-start;
  height: 14px;
}

.more {
  position: relative;
}

.more::after {
  content: "";
  position: absolute;
  right: -2px;
  bottom: -3px;
  border: 3px solid transparent;
  border-top-color: #111;
  border-bottom: 0;
}

/* Bottom tool bar */
.toolbar {
  height: 31px;
  flex: none;
  display: flex;
  background: linear-gradient(#fbfbff, #dad9e6 25%, #c6c5d3);
  border-bottom: 1px solid #8d8c9c;
}

.group {
  flex: none;
  display: flex;
  align-items: center;
  justify-content: space-between;
  padding: 3px 10px 0 7px;
  background: linear-gradient(#fff, #fff) right 4px / 1px 14px no-repeat;
}

.group button {
  width: 22px;
  height: 20px;
}

.group svg {
  width: 18px;
  height: 18px;
}

.group-standard {
  width: 201px;
  padding-left: 2px;
}

.group-knowledge {
  width: 177px;
}

.group-view {
  width: 300px;
}

.group-analysis {
  width: 204px;
}

.group-measure {
  width: 63px;
}

.group-tight {
  padding-right: 3px;
  background-size: 1px 100%;
}

.group-grid {
  width: 55px;
}

.group-cut {
  width: 57px;
}

.group-constraints {
  width: 86px;
  background: none;
}

.fx {
  font: italic bold 17px "Liberation Serif", serif;
  color: #222;
}

.fx small {
  font-size: 11px;
}

.disabled {
  fill: none;
  stroke: #aaa9b8;
}

.branches {
  fill: none;
  stroke: #5b5e58;
  stroke-width: 1.3;
}

.constraint {
  fill: none;
  stroke: #e39a55;
  stroke-width: 1.4;
}

.status {
  height: 20px;
  flex: none;
  display: flex;
  align-items: center;
  justify-content: space-between;
  background: #cfcce2;
  color: #26243c;
  font-size: 10px;
}

.status input {
  width: 250px;
  height: 16px;
  background: #fff;
  border: 1px solid #8d8c9c;
  border-right: none;
}

/* Taskbars */
.taskbar {
  flex: none;
  display: flex;
  align-items: stretch;
  color: #eee;
}

.taskbar-remote {
  height: 33px;
  background: #05141d;
}

.taskbar-local {
  height: 34px;
  background: #1b2b36;
}

.search {
  display: flex;
  align-items: center;
  background: #f2f2f1;
  font-size: 12px;
}

.taskbar-remote .search {
  flex: 0 0 269px;
  gap: 4px;
  border-bottom: 1px solid #bbb;
}

.taskbar-local .search {
  flex: 0 0 263px;
  padding-left: 10px;
}

.search svg {
  width: 12px;
  height: 20px;
}

.search input {
  flex: 1;
  padding: 0;
  background: none;
}

.search input::placeholder {
  color: #444;
  opacity: 1;
}

.apps {
  display: flex;
}

.apps button {
  width: 41px;
  border-bottom: 2px solid transparent;
  border-top: 2px solid transparent;
}

.apps svg {
  width: 20px;
  height: 20px;
}

.apps .running,
.apps .open {
  border-bottom-color: #78abdb;
}

.apps .open {
  background: #35434c;
  border-top-color: #35434c;
}

.apps .selected {
  background: #48565f;
  border-top-color: #48565f;
}

.battery {
  align-self: center;
  width: 40px;
  height: 18px;
  margin-left: auto;
  margin-right: 24px;
  padding-right: 3px;
  position: relative;
  border: 2px solid #fff;
  background: linear-gradient(to right, #25a34a 34px, #111 34px);
  font-size: 11px;
  line-height: 14px;
  text-align: center;
}

.battery::after {
  content: "";
  position: absolute;
  right: -4px;
  top: 3px;
  width: 2px;
  height: 8px;
  background: #fff;
}

.tray {
  display: flex;
  align-items: center;
  gap: 11px;
  font-size: 10px;
}

.taskbar-remote .tray {
  margin-left: auto;
  gap: 4px;
}

.tray svg {
  width: 16px;
  height: 16px;
  fill: none;
  stroke: #dfe4e7;
}

.taskbar-remote .pen {
  margin-left: 4px;
}

.lang {
  margin-left: 4px;
}

.clock {
  flex: 0 0 41px;
  min-width: 0;
  margin-left: 5px;
  display: flex;
  flex-direction: column;
  justify-content: center;
  white-space: nowrap;
  font-size: 10px;
  line-height: 15px;
}

.clock time {
  text-align: right;
}
```
